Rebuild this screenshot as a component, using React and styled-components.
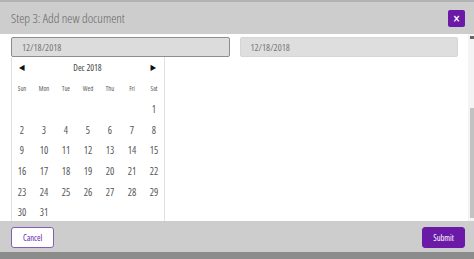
import React from "react";
import styled, { createGlobalStyle } from "styled-components";

const Global = createGlobalStyle`
  html, body { margin: 0; padding: 0; }
  body { width: 474px; height: 259px; overflow: hidden; background: #8c8c8c; font-family: "Open Sans", "Noto Sans", sans-serif; font-stretch: 80%; }
  button { font-stretch: 80%; }
`;

const Page = styled.div`
  width: 474px;
  height: 259px;
  display: flex;
  flex-direction: column;
  background: #8c8c8c;
`;

const TopStrip = styled.div`
  height: 2px;
  background: #b3b3b3;
`;

const Header = styled.div`
  height: 32px;
  background: #cdcdcd;
  display: flex;
  align-items: center;
  justify-content: space-between;
  padding: 0 9px 0 11px;
  box-sizing: border-box;
`;

const Title = styled.div`
  font-size: 13px;
  color: #666;
  font-weight: 350;
  font-stretch: 79%;
`;

const Close = styled.button`
  width: 17px;
  height: 17px;
  border: none;
  border-radius: 2px;
  background: #6a1aa6;
  color: #fff;
  font-size: 10px;
  line-height: 17px;
  padding: 0;
  margin-top: 1px;
  font-family: "DejaVu Sans", sans-serif;
  font-weight: bold;
`;

const Body = styled.div`
  height: 187px;
  background: #fff;
  display: flex;
  overflow: hidden;
`;

const Content = styled.div`
  flex: 1;
  padding: 3px 10px 0 11px;
  display: flex;
  flex-direction: column;
`;

const InputRow = styled.div`
  display: flex;
  gap: 10px;
`;

const Field = styled.div`
  flex: 1;
  display: flex;
  flex-direction: column;
`;

const Input = styled.div`
  height: 20px;
  box-sizing: border-box;
  background: ${(p) => (p.$focused ? "#dcdcdc" : "#dedede")};
  border: 1px solid ${(p) => (p.$focused ? "#8d8d8d" : "#d6d6d6")};
  border-radius: 2px;
  font-size: 9.5px;
  color: #777;
  padding-left: 10px;
  display: flex;
  align-items: center;
`;

const Calendar = styled.div`
  width: 154px;
  box-sizing: border-box;
  border-left: 1px solid #e0e0e0;
  border-right: 1px solid #e0e0e0;
  background: #fff;
  height: 200px;
`;

const CalHead = styled.div`
  height: 20px;
  display: flex;
  align-items: center;
  justify-content: space-between;
  padding: 0 8px 0 7px;
  font-size: 9px;
  color: #444;
`;

const Arrow = styled.span`
  font-size: 8px;
  color: #111;
  font-family: "DejaVu Sans", sans-serif;
`;

const Grid = styled.div`
  display: grid;
  grid-template-columns: repeat(7, 22px);
  margin-left: -1px;
`;

const DayName = styled.div`
  height: 22px;
  display: flex;
  align-items: center;
  justify-content: center;
  font-size: 6.5px;
  color: #555;
`;

const Day = styled.div`
  height: 20.6px;
  display: flex;
  align-items: center;
  justify-content: center;
  font-size: 10px;
  color: #555;
`;

const ScrollTrack = styled.div`
  width: 6px;
  background: #f4f4f4;
  display: flex;
  flex-direction: column;
  align-items: flex-end;
`;

const ScrollUp = styled.div`
  width: 4px;
  height: 3px;
  margin-top: 2px;
  background: #666;
`;

const Thumb = styled.div`
  width: 4px;
  margin-top: 69px;
  height: 110px;
  background: #c2c2c2;
`;

const Footer = styled.div`
  height: 31px;
  background: #cdcdcd;
  display: flex;
  align-items: center;
  justify-content: space-between;
  padding: 0 9px 0 11px;
`;

const Btn = styled.button`
  height: 21px;
  padding: 0 ${(p) => (p.$primary ? "10px" : "11px")};
  border-radius: 3px;
  border: 1px solid ${(p) => (p.$primary ? "#6a1aa6" : "#8a5bb5")};
  background: ${(p) => (p.$primary ? "#6a1aa6" : "#fff")};
  color: ${(p) => (p.$primary ? "#fff" : "#6a1aa6")};
  font-family: "Open Sans", "Noto Sans", sans-serif;
  font-size: 8.5px;
  margin-top: 2px;
`;

const BottomStrip = styled.div`
  height: 7px;
  background: #8c8c8c;
`;

const names = ["Sun", "Mon", "Tue", "Wed", "Thu", "Fri", "Sat"];
const days = [];
for (let i = 0; i < 6; i++) days.push(null);
for (let d = 1; d <= 31; d++) days.push(d);

export default function App() {
  return (
    <>
      <Global />
      <Page>
        <TopStrip />
        <Header>
          <Title>Step 3: Add new document</Title>
          <Close>×</Close>
        </Header>
        <Body>
          <Content>
            <InputRow>
              <Field>
                <Input $focused>12/18/2018</Input>
                <Calendar>
                  <CalHead>
                    <Arrow>◀</Arrow>
                    <span>Dec 2018</span>
                    <Arrow>▶</Arrow>
                  </CalHead>
                  <Grid>
                    {names.map((n) => (
                      <DayName key={n}>{n}</DayName>
                    ))}
                    {days.map((d, i) => (
                      <Day key={i}>{d}</Day>
                    ))}
                  </Grid>
                </Calendar>
              </Field>
              <Field>
                <Input>12/18/2018</Input>
              </Field>
            </InputRow>
          </Content>
          <ScrollTrack>
            <ScrollUp />
            <Thumb />
          </ScrollTrack>
        </Body>
        <Footer>
          <Btn>Cancel</Btn>
          <Btn $primary>Submit</Btn>
        </Footer>
        <BottomStrip />
      </Page>
    </>
  );
}
